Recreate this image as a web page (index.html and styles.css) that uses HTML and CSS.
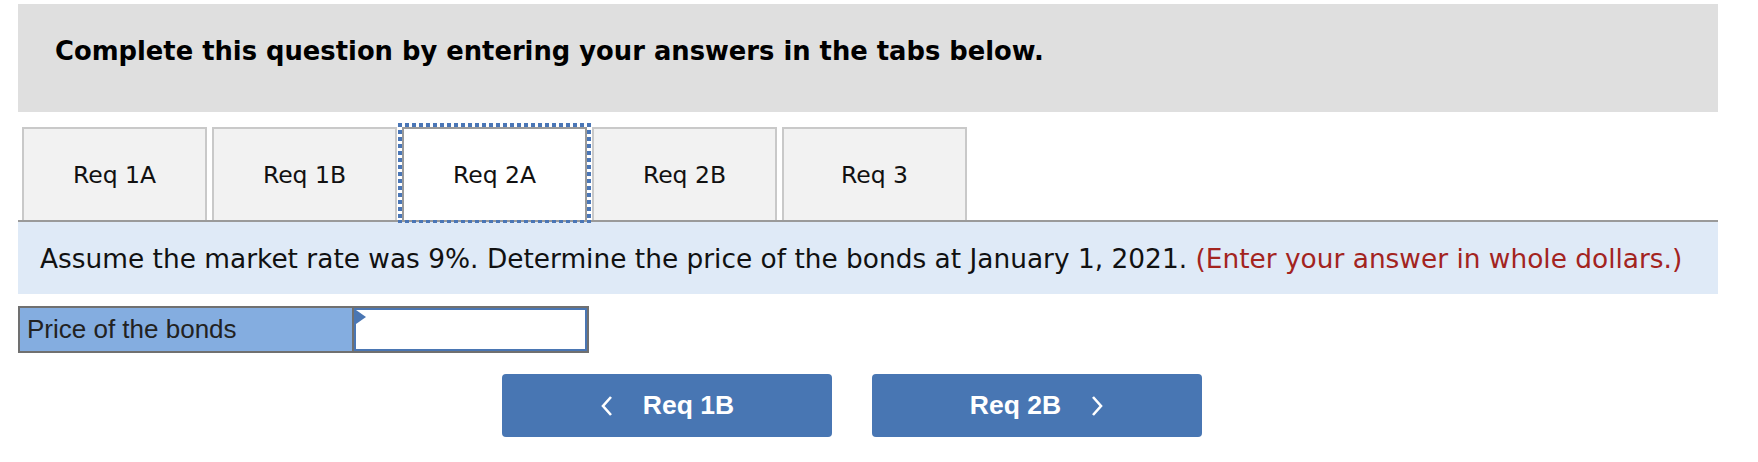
FILE: index.html
```html
<!DOCTYPE html>
<html>
<head>
<meta charset="utf-8">
<link rel="stylesheet" href="styles.css">
</head>
<body>
<div class="page">
  <div class="header">Complete this question by entering your answers in the tabs below.</div>
  <div class="tabs">
    <div class="tab">Req 1A</div>
    <div class="tab">Req 1B</div>
    <div class="tab active">Req 2A</div>
    <div class="tab">Req 2B</div>
    <div class="tab">Req 3</div>
  </div>
  <div class="band">Assume the market rate was 9%. Determine the price of the bonds at January 1, 2021.&nbsp;<span class="hint">(Enter your answer in whole dollars.)</span></div>
  <div class="answer">
    <div class="label">Price of the bonds</div>
    <div class="inputcell"><span class="flag"></span><input class="field" type="text" value=""></div>
  </div>
  <div class="nav">
    <div class="btn">
      <svg class="chev" width="14" height="22" viewBox="0 0 14 22"><polyline points="11,2 3,11 11,20" fill="none" stroke="#fff" stroke-width="2.6"/></svg>
      <span>Req 1B</span>
    </div>
    <div class="btn">
      <span>Req 2B</span>
      <svg class="chev" width="14" height="22" viewBox="0 0 14 22"><polyline points="3,2 11,11 3,20" fill="none" stroke="#fff" stroke-width="2.6"/></svg>
    </div>
  </div>
</div>
</body>
</html>
```
FILE: styles.css
```css
html, body {
  margin: 0;
  padding: 0;
  background: #ffffff;
}
body {
  font-family: "DejaVu Sans", Verdana, sans-serif;
  color: #111;
}
.page {
  padding: 4px 0 0 18px;
  width: 1700px;
}
.header {
  background: #dfdfdf;
  height: 108px;
  box-sizing: border-box;
  padding: 0 0 14px 37px;
  display: flex;
  align-items: center;
  font-weight: bold;
  font-size: 25.8px;
  color: #000;
}
.tabs {
  margin-top: 15px;
  padding-left: 4px;
  display: flex;
  gap: 5px;
  border-bottom: 2px solid #9a9a9a;
}
.tab {
  position: relative;
  box-sizing: border-box;
  width: 185px;
  height: 93px;
  background: #f2f2f2;
  border: 2px solid #c9c9c9;
  border-bottom: none;
  display: flex;
  align-items: center;
  justify-content: center;
  font-size: 23.5px;
  color: #111;
}
.tab.active {
  background: #fff;
  border-color: #9a9a9a;
}
.tab.active::after {
  content: "";
  position: absolute;
  left: -6px;
  right: -6px;
  top: -6px;
  bottom: -3px;
  pointer-events: none;
  background:
    repeating-linear-gradient(90deg, #4a76b6 0 4px, transparent 4px 7px) left top / 100% 4px no-repeat,
    repeating-linear-gradient(90deg, #4a76b6 0 4px, transparent 4px 7px) left bottom / 100% 3px no-repeat,
    repeating-linear-gradient(180deg, #4a76b6 0 4px, transparent 4px 7px) left top / 4px 100% no-repeat,
    repeating-linear-gradient(180deg, #4a76b6 0 4px, transparent 4px 7px) right top / 4px 100% no-repeat;
}
.band {
  background: #dfeaf7;
  height: 72px;
  box-sizing: border-box;
  padding-left: 22px;
  display: flex;
  align-items: center;
  font-size: 26.4px;
  color: #111;
  white-space: nowrap;
}
.hint {
  color: #a3241f;
}
.answer {
  margin-top: 12px;
  display: flex;
  width: 571px;
  height: 47px;
  box-sizing: border-box;
  border: 2px solid #707070;
}
.label {
  box-sizing: border-box;
  width: 334px;
  background: #84ade0;
  border-right: 2px solid #707070;
  font-family: "Liberation Sans", Arial, sans-serif;
  font-size: 26px;
  color: #222;
  padding-left: 7px;
  display: flex;
  align-items: center;
}
.inputcell {
  flex: 1;
  position: relative;
  border: 2px solid #4a76b3;
  background: #fff;
}
.field {
  border: none;
  outline: none;
  width: 100%;
  height: 100%;
  box-sizing: border-box;
  padding: 0 6px;
  background: transparent;
  font-family: "Liberation Sans", Arial, sans-serif;
  font-size: 22px;
}
.flag {
  position: absolute;
  left: 0;
  top: 0;
  width: 0;
  height: 0;
  border-top: 7px solid transparent;
  border-bottom: 7px solid transparent;
  border-left: 10px solid #4a76b3;
}
.nav {
  width: 1668px;
  margin-top: 21px;
  display: flex;
  justify-content: center;
  gap: 40px;
}
.btn {
  box-sizing: border-box;
  width: 330px;
  height: 63px;
  background: #4876b3;
  border-radius: 4px;
  display: flex;
  align-items: center;
  justify-content: center;
  gap: 29px;
  color: #fff;
  font-family: "Liberation Sans", Arial, sans-serif;
  font-weight: bold;
  font-size: 26.5px;
}
.chev {
  display: block;
}
```
